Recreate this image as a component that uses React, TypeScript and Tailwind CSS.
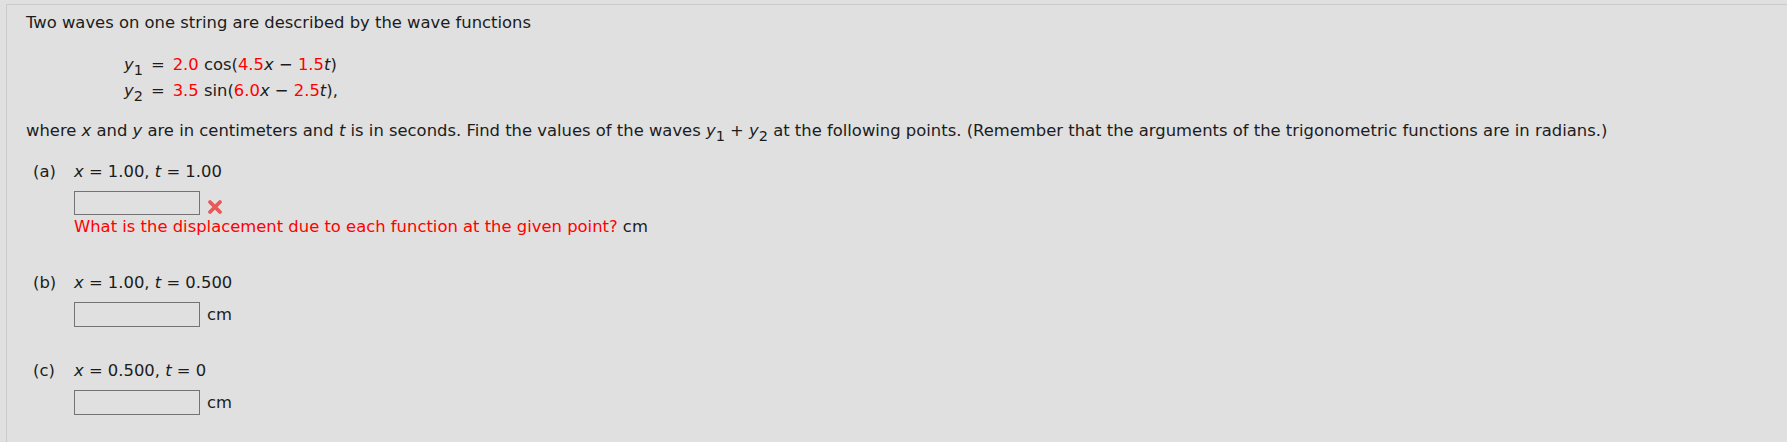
import React from 'react';

const red = 'text-[#ff0000]';

function Sub({ children }: { children: React.ReactNode }) {
  return <span className="relative top-[5px] text-[14.5px]">{children}</span>;
}

function V({ children }: { children: React.ReactNode }) {
  return <i className="italic">{children}</i>;
}

function AnswerBox({ unit }: { unit?: boolean }) {
  return (
    <div className="mt-[7px] flex items-center gap-[7px]">
      <div className="h-[25px] w-[126px] border border-[#737373]" />
      {unit && <span className="leading-[24px]">cm</span>}
    </div>
  );
}

export default function App() {
  return (
    <div
      className="min-h-screen bg-[#e0e0e0] pl-[6px] pt-[4px] text-[16.4px] text-[#1c1c1c]"
      style={{ fontFamily: '"DejaVu Sans", Verdana, sans-serif' }}
    >
      <div className="min-h-[438px] border-l border-t border-[#cbcbcb] pl-[19px] pt-[6px]">
        <p className="leading-[24px]">Two waves on one string are described by the wave functions</p>

        {/* wave functions */}
        <div className="ml-[98px] mt-[17px] leading-[25px]">
          <div className="whitespace-nowrap">
            <V>y</V>
            <Sub>1</Sub>
            <span className="ml-[8px] mr-[8px]">=</span>
            <span className={red}>2.0</span> cos(<span className={red}>4.5</span>
            <V>x</V> − <span className={red}>1.5</span>
            <V>t</V>)
          </div>
          <div className="whitespace-nowrap">
            <V>y</V>
            <Sub>2</Sub>
            <span className="ml-[8px] mr-[8px]">=</span>
            <span className={red}>3.5</span> sin(<span className={red}>6.0</span>
            <V>x</V> − <span className={red}>2.5</span>
            <V>t</V>),
          </div>
        </div>

        <p className="mt-[15px] whitespace-nowrap leading-[24px]">
          where <V>x</V> and <V>y</V> are in centimeters and <V>t</V> is in seconds. Find the values of the waves{' '}
          <V>y</V>
          <Sub>1</Sub> + <V>y</V>
          <Sub>2</Sub> at the following points. (Remember that the arguments of the trigonometric functions are in
          radians.)
        </p>

        {/* (a) */}
        <div className="ml-[7px] mt-[17px] flex leading-[24px]">
          <span className="w-[41px]">(a)</span>
          <div>
            <div>
              <V>x</V> = 1.00, <V>t</V> = 1.00
            </div>
            <div className="mt-[7px] flex items-center gap-[7px]">
              <div className="h-[24px] w-[126px] border border-[#737373]" />
              <svg width="16" height="16" viewBox="0 0 16 16" className="mt-[8px]">
                <path d="M3 3 L13 13 M13 3 L3 13" stroke="#ea5757" strokeWidth="3.8" strokeLinecap="round" />
              </svg>
            </div>
            <div className="whitespace-nowrap">
              <span className={red}>What is the displacement due to each function at the given point?</span> cm
            </div>
          </div>
        </div>

        {/* (b) */}
        <div className="ml-[7px] mt-[32px] flex leading-[24px]">
          <span className="w-[41px]">(b)</span>
          <div>
            <div>
              <V>x</V> = 1.00, <V>t</V> = 0.500
            </div>
            <AnswerBox unit />
          </div>
        </div>

        {/* (c) */}
        <div className="ml-[7px] mt-[32px] flex leading-[24px]">
          <span className="w-[41px]">(c)</span>
          <div>
            <div>
              <V>x</V> = 0.500, <V>t</V> = 0
            </div>
            <AnswerBox unit />
          </div>
        </div>
      </div>
    </div>
  );
}
